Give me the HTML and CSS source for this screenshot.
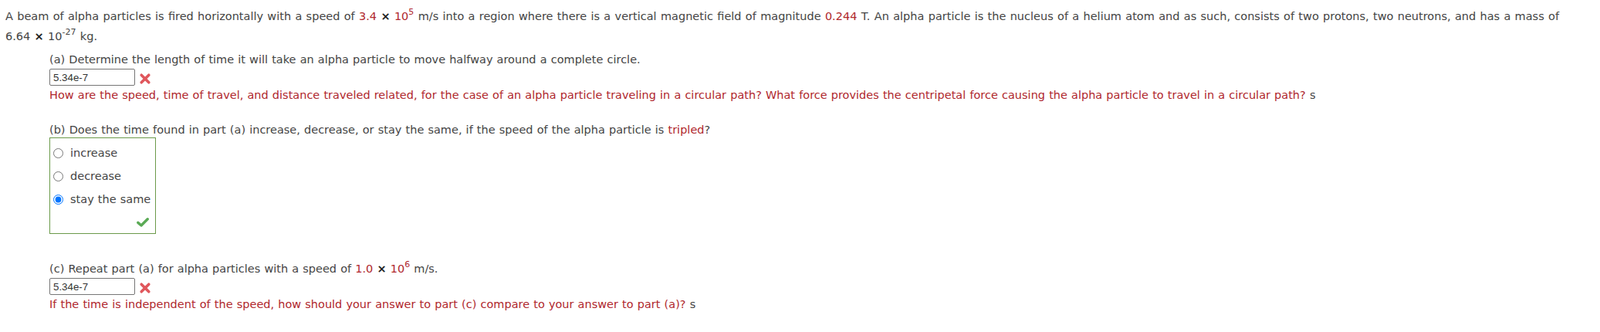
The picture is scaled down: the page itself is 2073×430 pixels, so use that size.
FILE: index.html
```html
<!DOCTYPE html>
<html lang="en">
<head>
<meta charset="utf-8">
<title>Alpha particles in a magnetic field</title>
<link rel="stylesheet" href="styles.css">
</head>
<body>
<div class="question">
  <p class="stem">A beam of alpha particles is fired horizontally with a speed of <span class="val">3.4</span> <b class="times">&times;</b> <span class="val">10<sup>5</sup></span> m/s into a region where there is a vertical magnetic field of magnitude <span class="val">0.244</span> T. An alpha particle is the nucleus of a helium atom and as such, consists of two protons, two neutrons, and has a mass of <span class="nowrap">6.64 <b class="times">&times;</b> 10<sup>-27</sup> kg.</span></p>

  <div class="part part-a">
    <div class="prompt">(a) Determine the length of time it will take an alpha particle to move halfway around a complete circle.</div>
    <div class="answer">
      <input class="field" type="text" value="5.34e-7">
      <svg class="xmark" viewBox="0 0 16 16" width="16" height="16" aria-hidden="true"><path d="M3.2 3.2 L12.8 12.8 M12.8 3.2 L3.2 12.8" /></svg>
    </div>
    <div class="hint">How are the speed, time of travel, and distance traveled related, for the case of an alpha particle traveling in a circular path? What force provides the centripetal force causing the alpha particle to travel in a circular path? <span class="unit">s</span></div>
  </div>

  <div class="part part-b">
    <div class="prompt">(b) Does the time found in part (a) increase, decrease, or stay the same, if the speed of the alpha particle is <span class="val">tripled</span>?</div>
    <div class="choices">
      <label class="choice"><input type="radio" name="b"> <span>increase</span></label>
      <label class="choice"><input type="radio" name="b"> <span>decrease</span></label>
      <label class="choice"><input type="radio" name="b" checked> <span>stay the same</span></label>
      <div class="check-row">
        <svg class="check" viewBox="0 0 16 12" width="16" height="12" aria-hidden="true"><path d="M1.8 6.4 L6 10 L14.2 1.8" /></svg>
      </div>
    </div>
  </div>

  <div class="part part-c">
    <div class="prompt">(c) Repeat part (a) for alpha particles with a speed of <span class="val">1.0</span> <b class="times">&times;</b> <span class="val">10<sup>6</sup></span> m/s.</div>
    <div class="answer">
      <input class="field" type="text" value="5.34e-7">
      <svg class="xmark" viewBox="0 0 16 16" width="16" height="16" aria-hidden="true"><path d="M3.2 3.2 L12.8 12.8 M12.8 3.2 L3.2 12.8" /></svg>
    </div>
    <div class="hint">If the time is independent of the speed, how should your answer to part (c) compare to your answer to part (a)? <span class="unit">s</span></div>
  </div>
</div>
</body>
</html>
```

FILE: styles.css
```css
html, body {
  background: #ffffff;
}

body {
  margin: 8px 8px 0 7px;
}

.question {
  font-family: Verdana, "DejaVu Sans", sans-serif;
  font-size: 14.5px;
  color: #444444;
  word-spacing: 0.5px;
}

.stem {
  margin: 0;
  line-height: 26px;
  word-spacing: 0.7px;
}

.nowrap {
  white-space: nowrap;
}

.val {
  color: #b0272d;
}

.times {
  color: #222222;
  font-weight: bold;
}

sup {
  font-size: 11px;
  line-height: 0;
  vertical-align: 7px;
}

.part {
  margin-left: 57px;
  line-height: 20px;
}

.part-a {
  margin-top: 7px;
}

.part-b {
  margin-top: 25px;
}

.part-c {
  margin-top: 35px;
}

.answer {
  display: flex;
  align-items: center;
  gap: 5px;
  margin-top: 2px;
  height: 22px;
}

.field {
  box-sizing: border-box;
  width: 111px;
  height: 22px;
  margin: 0;
  padding: 1px 4px;
  border: 1px solid #767676;
  border-radius: 2px;
  font-family: "Liberation Sans", Arial, sans-serif;
  font-size: 13.3px;
  color: #333333;
  background: #ffffff;
  word-spacing: 0;
}

.xmark {
  display: block;
  margin-top: 4px;
}

.xmark path {
  fill: none;
  stroke: #e0575c;
  stroke-width: 3.6;
  stroke-linecap: round;
}

.hint {
  margin-top: 2px;
  color: #b0272d;
}

.unit {
  color: #444444;
}

.choices {
  box-sizing: border-box;
  width: 138px;
  height: 125px;
  border: 1px solid #6b9a4a;
  padding: 4px 0 0 4px;
  display: flex;
  flex-direction: column;
}

.choice {
  display: flex;
  align-items: center;
  gap: 9px;
  height: 30px;
  white-space: nowrap;
}

.choice input {
  margin: 0;
  width: 13px;
  height: 13px;
  flex: none;
}

.check-row {
  flex: 1;
  display: flex;
  justify-content: flex-end;
  align-items: center;
  padding-right: 8px;
}

.check path {
  fill: none;
  stroke: #5aaa55;
  stroke-width: 3.4;
  stroke-linecap: round;
  stroke-linejoin: round;
}
```
